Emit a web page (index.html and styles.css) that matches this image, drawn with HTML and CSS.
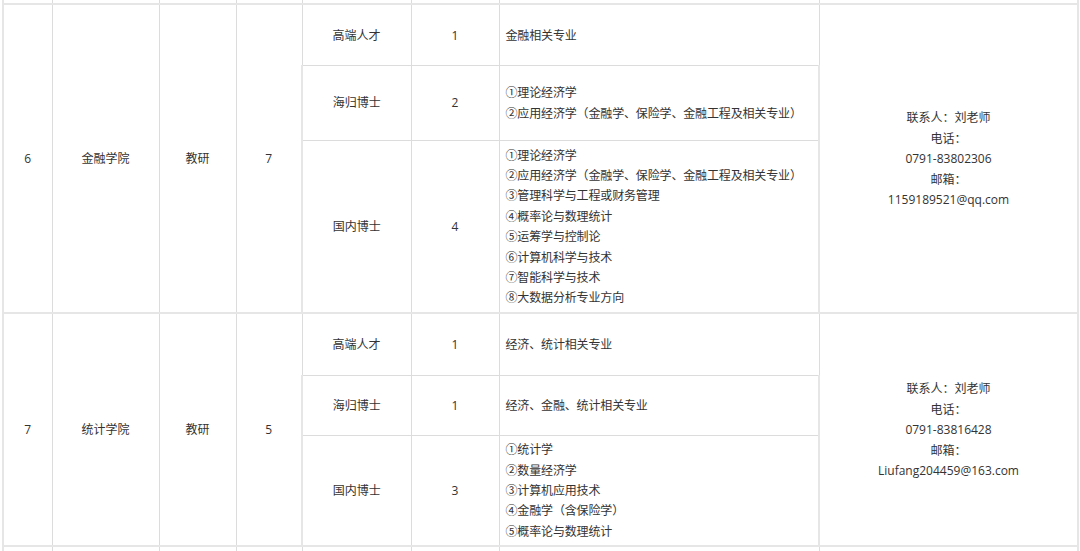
FILE: index.html
```html
<!DOCTYPE html>
<html lang="zh-CN">
<head>
<meta charset="utf-8">
<title>招聘岗位表</title>
<link rel="stylesheet" href="styles.css">
</head>
<body>
<div class="page">
<table class="jobs">
  <colgroup>
    <col class="c-no"><col class="c-school"><col class="c-type"><col class="c-total">
    <col class="c-level"><col class="c-num"><col class="c-major"><col class="c-contact">
  </colgroup>
  <tbody>
    <tr class="r-prev">
      <td></td><td></td><td></td><td></td><td></td><td></td><td></td><td></td>
    </tr>
    <tr class="r-a group-top">
      <td rowspan="3">6</td>
      <td rowspan="3">金融学院</td>
      <td rowspan="3">教研</td>
      <td rowspan="3">7</td>
      <td>高端人才</td>
      <td>1</td>
      <td class="major">金融相关专业</td>
      <td rowspan="3" class="contact">联系人：刘老师<br>电话：<br>0791-83802306<br>邮箱：<br>1159189521@qq.com</td>
    </tr>
    <tr class="r-b">
      <td>海归博士</td>
      <td>2</td>
      <td class="major">①理论经济学<br>②应用经济学（金融学、保险学、金融工程及相关专业）</td>
    </tr>
    <tr class="r-c">
      <td>国内博士</td>
      <td>4</td>
      <td class="major">①理论经济学<br>②应用经济学（金融学、保险学、金融工程及相关专业）<br>③管理科学与工程或财务管理<br>④概率论与数理统计<br>⑤运筹学与控制论<br>⑥计算机科学与技术<br>⑦智能科学与技术<br>⑧大数据分析专业方向</td>
    </tr>
    <tr class="r-d group-top">
      <td rowspan="3">7</td>
      <td rowspan="3">统计学院</td>
      <td rowspan="3">教研</td>
      <td rowspan="3">5</td>
      <td>高端人才</td>
      <td>1</td>
      <td class="major">经济、统计相关专业</td>
      <td rowspan="3" class="contact">联系人：刘老师<br>电话：<br>0791-83816428<br>邮箱：<br>Liufang204459@163.com</td>
    </tr>
    <tr class="r-e">
      <td>海归博士</td>
      <td>1</td>
      <td class="major">经济、金融、统计相关专业</td>
    </tr>
    <tr class="r-f">
      <td>国内博士</td>
      <td>3</td>
      <td class="major">①统计学<br>②数量经济学<br>③计算机应用技术<br>④金融学（含保险学）<br>⑤概率论与数理统计</td>
    </tr>
    <tr class="r-next group-top">
      <td></td><td></td><td></td><td></td><td></td><td></td><td></td><td></td>
    </tr>
  </tbody>
</table>
</div>
</body>
</html>
```
FILE: styles.css
```css
html, body {
  margin: 0;
  padding: 0;
  background: #ffffff;
}
.page {
  width: 1080px;
  height: 551px;
  overflow: hidden;
  padding-left: 2px;
  box-sizing: border-box;
}
.jobs {
  border-collapse: collapse;
  table-layout: fixed;
  width: 1075px;
  font-family: "Open Sans", "Noto Sans CJK SC", sans-serif;
  font-size: 12px;
  color: #333333;
}
.c-no { width: 49px; }
.c-school { width: 107px; }
.c-type { width: 77px; }
.c-total { width: 66px; }
.c-level { width: 109px; }
.c-num { width: 88px; }
.c-major { width: 320px; }
.c-contact { width: 259px; }

.jobs td {
  border: 1px solid #dcdcdc;
  padding: 2px 0 0 0;
  text-align: center;
  vertical-align: middle;
  line-height: 20.4px;
}
.jobs td:first-child { border-left: 2px solid #e6e6e6; }
.jobs td:last-child,
.jobs td.contact { border-right: 2px solid #e6e6e6; }
.jobs tr.group-top td { border-top: 2px solid #e6e6e6; }
.jobs tr.r-prev td { border-top: none; padding: 0; }

.jobs td.major {
  text-align: left;
  padding-left: 6px;
  letter-spacing: -0.15px;
}
.r-prev { height: 4px; }
.r-a { height: 61px; }
.r-b { height: 75px; }
.r-c { height: 173px; }
.r-d { height: 62px; }
.r-e { height: 60px; }
.r-f { height: 111px; }
.r-next { height: 30px; }
```
